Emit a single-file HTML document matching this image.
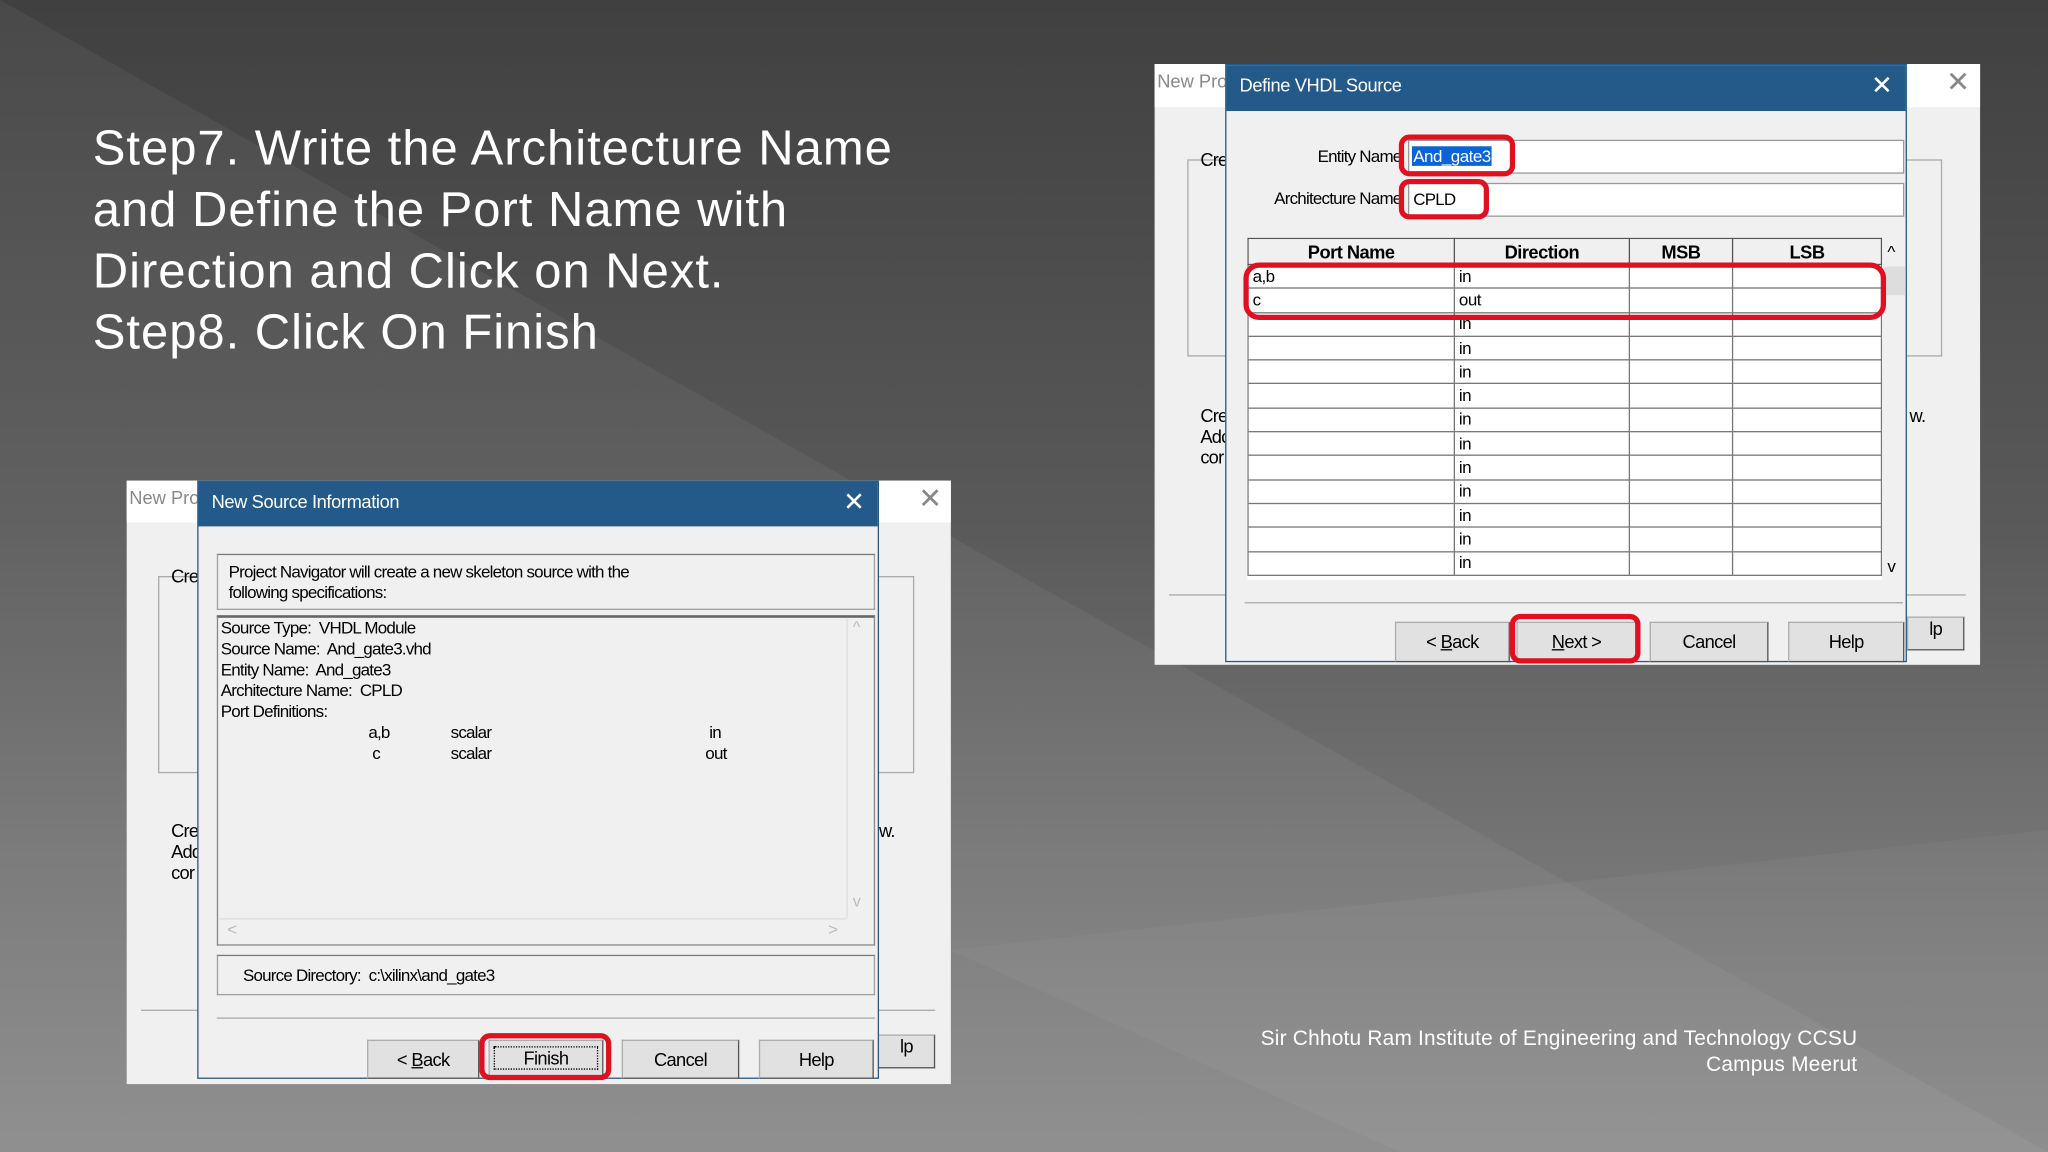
<!DOCTYPE html>
<html><head><meta charset="utf-8"><style>
*{margin:0;padding:0;box-sizing:border-box}
html,body{width:2048px;height:1152px;overflow:hidden}
body{background:linear-gradient(180deg,#404040 0%,#595959 45%,#7a7a7a 80%,#8a8a8a 100%)}
#s{position:absolute;left:0;top:0;width:1568px;height:882px;transform:scale(1.30612);transform-origin:0 0;font-family:"Liberation Sans",sans-serif}
.a{position:absolute}
.t{font-size:13px;color:#000;white-space:nowrap;letter-spacing:-0.6px}
.win{background:#f0f0f0}
.tb{background:#235a8a;color:#fff;font-size:14px;letter-spacing:-0.3px}
.btn{position:absolute;background:#e1e1e1;border:1px solid #adadad;border-right-color:#555;border-bottom-color:#555;font-size:14px;text-align:center;letter-spacing:-0.5px}
.red{position:absolute;border:4px solid #e01020;border-radius:8px}
.bx{position:absolute;border:1px solid #a0a0a0;border-top-color:#7a7a7a}
table{border-collapse:collapse;font-size:13px;letter-spacing:-0.4px}
td{border:1px solid #777;height:18.3px;padding:0 3px;line-height:16px}
th{border:1px solid #555;background:#f0f0f0;height:20px;font-size:14px}
</style></head><body>
<svg class="a" style="left:0;top:0" width="2048" height="1152">
<polygon points="0,0 850,480 2048,1152 0,1152" fill="#ffffff" opacity="0.05"/>
<polygon points="950,950 2048,830 2048,1152 1400,1152" fill="#ffffff" opacity="0.04"/>
</svg>
<div id="s">
<div class="a" style="left:71px;top:90px;color:#fff;font-size:37.5px;line-height:47px;letter-spacing:0.75px">Step7. Write the Architecture Name<br>and Define the Port Name with<br>Direction and Click on Next.<br>Step8. Click On Finish</div>
<div class="a" style="left:900px;top:786px;width:522px;text-align:right;color:#fff;font-size:16px;line-height:20px;letter-spacing:0.15px">Sir Chhotu Ram Institute of Engineering and Technology CCSU<br>Campus Meerut</div>

<!-- RIGHT -->
<div class="a win" style="left:884px;top:49px;width:632px;height:460px">
 <div class="a" style="left:0;top:0;width:632px;height:33px;background:#fff"></div>
 <div class="a" style="left:2px;top:5px;color:#888;font-size:14px">New Pro</div>
 <div class="a" style="left:606px;top:1px;color:#888;font-size:22px">✕</div>
 <div class="a" style="left:25px;top:73px;width:578px;height:151px;border:1px solid #aaa"></div>
 <div class="a t" style="left:35px;top:65px;font-size:14px">Cre</div>
 <div class="a t" style="left:35px;top:261px;line-height:16px;font-size:14px">Cre<br>Adc<br>cor</div>
 <div class="a t" style="left:578px;top:261px;font-size:14px">w.</div>
 <div class="a" style="left:11px;top:406px;width:610px;border-top:1px solid #aaa"></div>
 <div class="btn" style="left:576px;top:423px;width:44px;height:26px">lp</div>
</div>
<div class="a win" style="left:938px;top:49px;width:522px;height:458px;border:1px solid #235a8a">
 <div class="a tb" style="left:0;top:0;width:520px;height:35px;padding:7px 10px">Define VHDL Source<span style="position:absolute;right:10px;top:3px;font-size:20px">✕</span></div>
 <div class="a t" style="left:0;top:62px;width:134px;text-align:right">Entity Name</div>
 <div class="a" style="left:139px;top:57px;width:380px;height:26px;background:#fff;border:1px solid #999"><span style="position:absolute;left:2px;top:4px;background:#0a64d6;color:#fff;font-size:13px;padding:0 1px;letter-spacing:-.4px">And_gate3</span></div>
 <div class="a t" style="left:0;top:94px;width:134px;text-align:right">Architecture Name</div>
 <div class="a" style="left:139px;top:90px;width:380px;height:26px;background:#fff;border:1px solid #999"><span class="t" style="position:absolute;left:3px;top:4px">CPLD</span></div>
 <div class="a" style="left:16px;top:132px;width:486px;height:262px;background:#fff;overflow:hidden">
 <table style="width:486px">
 <tr><th style="width:158px">Port Name</th><th style="width:134px">Direction</th><th style="width:79px">MSB</th><th>LSB</th></tr>
 <tr><td>a,b</td><td>in</td><td></td><td></td></tr>
 <tr><td>c</td><td>out</td><td></td><td></td></tr>
 <tr><td></td><td>in</td><td></td><td></td></tr><tr><td></td><td>in</td><td></td><td></td></tr><tr><td></td><td>in</td><td></td><td></td></tr><tr><td></td><td>in</td><td></td><td></td></tr><tr><td></td><td>in</td><td></td><td></td></tr><tr><td></td><td>in</td><td></td><td></td></tr><tr><td></td><td>in</td><td></td><td></td></tr><tr><td></td><td>in</td><td></td><td></td></tr><tr><td></td><td>in</td><td></td><td></td></tr><tr><td></td><td>in</td><td></td><td></td></tr><tr><td></td><td>in</td><td></td><td></td></tr>
 </table></div>
 <div class="a" style="left:504px;top:154px;width:16px;height:22px;background:#ddd"></div>
 <div class="a t" style="left:506px;top:135px">^</div>
 <div class="a t" style="left:506px;top:376px">v</div>
 <div class="a" style="left:14px;top:411px;width:504px;border-top:1px solid #aaa"></div>
 <div class="btn" style="left:129px;top:426px;width:88px;height:31px;line-height:29px">&lt; <u>B</u>ack</div>
 <div class="btn" style="left:222px;top:426px;width:92px;height:31px;line-height:29px"><u>N</u>ext &gt;</div>
 <div class="btn" style="left:324px;top:426px;width:91px;height:31px;line-height:29px">Cancel</div>
 <div class="btn" style="left:430px;top:426px;width:89px;height:31px;line-height:29px">Help</div>
</div>
<div class="red" style="left:1071px;top:103px;width:89px;height:32px"></div>
<div class="red" style="left:1071px;top:137px;width:69px;height:31px"></div>
<div class="red" style="left:952px;top:201px;width:492px;height:44px;border-radius:12px"></div>
<div class="red" style="left:1156px;top:470px;width:100px;height:38px"></div>

<!-- LEFT -->
<div class="a win" style="left:97px;top:368px;width:631px;height:462px">
 <div class="a" style="left:0;top:0;width:631px;height:32px;background:#fff"></div>
 <div class="a" style="left:2px;top:5px;color:#888;font-size:14px">New Pro</div>
 <div class="a" style="left:606px;top:1px;color:#888;font-size:22px">✕</div>
 <div class="a" style="left:24px;top:73px;width:579px;height:151px;border:1px solid #aaa"></div>
 <div class="a t" style="left:34px;top:65px;font-size:14px">Cre</div>
 <div class="a t" style="left:34px;top:260px;line-height:16px;font-size:14px">Cre<br>Add<br>cor</div>
 <div class="a t" style="left:576px;top:260px;font-size:14px">w.</div>
 <div class="a" style="left:11px;top:405px;width:608px;border-top:1px solid #aaa"></div>
 <div class="btn" style="left:575px;top:424px;width:44px;height:26px">lp</div>
</div>
<div class="a win" style="left:151px;top:368px;width:522px;height:458px;border:1px solid #235a8a">
 <div class="a tb" style="left:0;top:0;width:520px;height:34px;padding:7px 10px">New Source Information<span style="position:absolute;right:10px;top:3px;font-size:20px">✕</span></div>
 <div class="bx" style="left:14px;top:55px;width:504px;height:43px"></div>
 <div class="a t" style="left:23px;top:61px;line-height:16px">Project Navigator will create a new skeleton source with the<br>following specifications:</div>
 <div class="a" style="left:14px;top:102px;width:504px;height:253px;border:1px solid #888;border-top:2px solid #666;background:#f0f0f0"></div>
 <div class="a t" style="left:17px;top:104px;line-height:16px">Source Type:&nbsp; VHDL Module<br>Source Name:&nbsp; And_gate3.vhd<br>Entity Name:&nbsp; And_gate3<br>Architecture Name:&nbsp; CPLD<br>Port Definitions:</div>
 <div class="a t" style="left:130px;top:184px;line-height:16px">a,b<br>&nbsp;c</div>
 <div class="a t" style="left:193px;top:184px;line-height:16px">scalar<br>scalar</div>
 <div class="a t" style="left:388px;top:184px;line-height:16px">&nbsp;in<br>out</div>
 <div class="a" style="left:16px;top:334px;width:480px;border-top:1px solid #ddd"></div>
 <div class="a" style="left:496px;top:104px;border-left:1px solid #ddd;height:230px"></div>
 <div class="a" style="left:501px;top:104px;color:#bbb;font-size:12px">^</div>
 <div class="a" style="left:501px;top:314px;color:#bbb;font-size:12px">v</div>
 <div class="a" style="left:22px;top:335px;color:#bbb;font-size:13px">&lt;</div>
 <div class="a" style="left:482px;top:335px;color:#bbb;font-size:13px">&gt;</div>
 <div class="bx" style="left:14px;top:362px;width:504px;height:31px"></div>
 <div class="a t" style="left:34px;top:370px">Source Directory:&nbsp; c:\xilinx\and_gate3</div>
 <div class="a" style="left:14px;top:410px;width:504px;border-top:1px solid #aaa"></div>
 <div class="btn" style="left:129px;top:427px;width:86px;height:30px;line-height:28px">&lt; <u>B</u>ack</div>
 <div class="btn" style="left:222px;top:427px;width:88px;height:30px;line-height:26px"><span style="border:1px dotted #000;padding:0 22px">Finish</span></div>
 <div class="btn" style="left:324px;top:427px;width:90px;height:30px;line-height:28px">Cancel</div>
 <div class="btn" style="left:429px;top:427px;width:88px;height:30px;line-height:28px">Help</div>
</div>
<div class="red" style="left:367px;top:791px;width:101px;height:36px"></div>
</div>
</body></html>
